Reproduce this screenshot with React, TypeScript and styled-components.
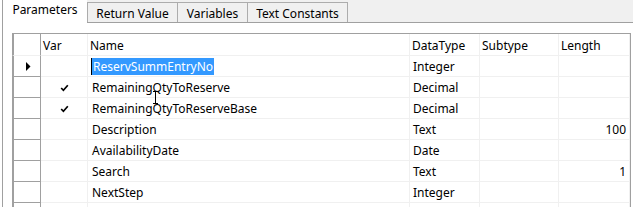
import React from "react";
import styled, { createGlobalStyle } from "styled-components";

const Global = createGlobalStyle`
  html, body { margin: 0; padding: 0; background: #fff; }
  body { font-family: "Noto Sans", "Open Sans", sans-serif; font-size: 12px; color: #000; }
`;

const Outer = styled.div`
  width: 633px;
  height: 207px;
  overflow: hidden;
  padding-left: 2px;
  box-sizing: border-box;
  background: #fff;
  position: relative;
`;

const Inner = styled.div`
  height: 100%;
  border-left: 1px solid #a0a0a0;
  display: flex;
  flex-direction: column;
`;

const TabBar = styled.div`
  display: flex;
  height: 23px;
  box-sizing: border-box;
  border-bottom: 1px solid #a0a0a0;
  background: #f0f0f0;
  align-items: flex-end;
`;

const Tab = styled.div<{ $active?: boolean; $w: number; $last?: boolean }>`
  width: ${(p) => p.$w}px;
  box-sizing: border-box;
  display: flex;
  align-items: center;
  justify-content: center;
  white-space: nowrap;
  ${(p) =>
    p.$active
      ? `
    height: 23px;
    margin-bottom: -1px;
    background: #fff;
    padding-bottom: 4px;
  `
      : `
    height: 20px;
    background: #f0f0f0;
    border-top: 1px solid #acacac;
    border-left: 1px solid #acacac;
    padding-top: 1px;
  `}
  ${(p) => (p.$last ? "border-right: 1px solid #acacac;" : "")}
`;

const Panel = styled.div`
  flex: 1;
  background: #fff;
  padding: 10px 0 0 9px;
  position: relative;
`;

const Grid = styled.div`
  width: 619px;
  border-top: 1px solid #a0a0a0;
  border-right: 1px solid #a0a0a0;
  box-sizing: border-box;
`;

const cols = [29, 47, 322, 70, 79, 71];

const Row = styled.div<{ $h: number }>`
  display: grid;
  grid-template-columns: ${cols.map((c) => c + "px").join(" ")};
  height: ${(p) => p.$h}px;
`;

const Cell = styled.div<{ $align?: string; $pad?: number }>`
  box-sizing: border-box;
  border-right: 1px solid #f0f0f0;
  border-bottom: 1px solid #f0f0f0;
  display: flex;
  align-items: center;
  justify-content: ${(p) => p.$align || "flex-start"};
  padding: 1px ${(p) => (p.$align === "flex-end" ? 3 : 0)}px 0 ${(p) => p.$pad ?? 3}px;
  white-space: nowrap;
  overflow: hidden;
`;

const HeadCell = styled(Cell)`
  padding-left: 2px;
`;

const Indicator = styled.div<{ $head?: boolean }>`
  box-sizing: border-box;
  border-left: 2px solid #a0a0a0;
  border-right: 1px solid #a0a0a0;
  border-bottom: 1px solid ${(p) => (p.$head ? "#f0f0f0" : "#a0a0a0")};
  display: flex;
  align-items: center;
  justify-content: center;
  padding-left: 2px;
`;

const Selected = styled.span`
  background: #3399ff;
  color: #fff;
  border-left: 1px solid #000;
  padding: 1px 1px 1px 1px;
  line-height: 15px;
  margin-left: -1px;
`;

const Beam = styled.svg`
  position: absolute;
  left: 149px;
  top: 68px;
`;

const Check = () => (
  <svg width="9" height="8" viewBox="0 0 9 8">
    <path d="M1.2 4 L3.4 6.3 L7.8 1.2" fill="none" stroke="#000" strokeWidth="1.7" />
  </svg>
);

const Arrow = () => (
  <svg width="5" height="9" viewBox="0 0 5 9">
    <polygon points="0,0 4.5,4.5 0,9" fill="#000" />
  </svg>
);

type R = { name: string; type: string; len?: string; check?: boolean; current?: boolean };

const rows: R[] = [
  { name: "ReservSummEntryNo", type: "Integer", current: true },
  { name: "RemainingQtyToReserve", type: "Decimal", check: true },
  { name: "RemainingQtyToReserveBase", type: "Decimal", check: true },
  { name: "Description", type: "Text", len: "100" },
  { name: "AvailabilityDate", type: "Date" },
  { name: "Search", type: "Text", len: "1" },
  { name: "NextStep", type: "Integer" },
  { name: "", type: "" },
];

export default function App() {
  return (
    <Outer>
      <Global />
      <Inner>
        <TabBar>
          <Tab $active $w={84}>Parameters</Tab>
          <Tab $w={90}>Return Value</Tab>
          <Tab $w={70}>Variables</Tab>
          <Tab $w={101} $last>Text Constants</Tab>
        </TabBar>
        <Panel>
          <Grid>
            <Row $h={22}>
              <Indicator $head />
              <HeadCell>Var</HeadCell>
              <HeadCell>Name</HeadCell>
              <HeadCell>DataType</HeadCell>
              <HeadCell>Subtype</HeadCell>
              <HeadCell>Length</HeadCell>
            </Row>
            {rows.map((r, i) => (
              <Row $h={21} key={i}>
                <Indicator>{r.current ? <Arrow /> : null}</Indicator>
                <Cell $align="center" $pad={0}>{r.check ? <Check /> : null}</Cell>
                <Cell $pad={4}>{r.current ? <Selected>{r.name}</Selected> : r.name}</Cell>
                <Cell>{r.type}</Cell>
                <Cell />
                <Cell $align="flex-end">{r.len}</Cell>
              </Row>
            ))}
          </Grid>
          <Beam width="7" height="13" viewBox="0 0 7 13">
            <path d="M1 0.5 H6 M3.5 0.5 V12.5 M1 12.5 H6" stroke="#000" strokeWidth="1" fill="none" />
          </Beam>
        </Panel>
      </Inner>
    </Outer>
  );
}
